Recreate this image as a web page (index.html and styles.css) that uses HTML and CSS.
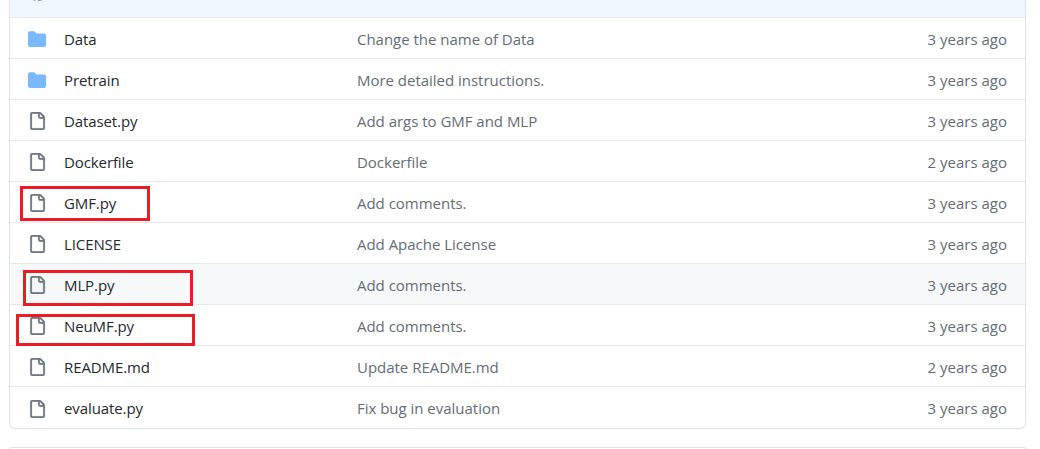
FILE: index.html
```html
<!DOCTYPE html>
<html lang="en">
<head>
  <meta charset="UTF-8">
  <title>Files</title>
  <link rel="stylesheet" href="styles.css">
</head>
<body>

<svg width="0" height="0" class="defs">
  <symbol id="folder" viewBox="0 0 16 16">
    <path d="M1.75 1A1.75 1.75 0 0 0 0 2.75v10.5C0 14.216.784 15 1.75 15h12.5A1.75 1.75 0 0 0 16 13.25v-8.5A1.75 1.75 0 0 0 14.25 3H7.5a.25.25 0 0 1-.2-.1l-.9-1.2C6.07 1.26 5.55 1 5 1H1.75Z"/>
  </symbol>
  <symbol id="file" viewBox="0 0 16 16">
    <path d="M2 1.75C2 .784 2.784 0 3.75 0h6.586c.464 0 .909.184 1.237.513l2.914 2.914c.329.328.513.773.513 1.237v9.586A1.75 1.75 0 0 1 13.25 16h-9.5A1.75 1.75 0 0 1 2 14.25Zm1.75-.25a.25.25 0 0 0-.25.25v12.5c0 .138.112.25.25.25h9.5a.25.25 0 0 0 .25-.25V6h-2.75A1.75 1.75 0 0 1 9 4.25V1.5Zm6.75.062V4.25c0 .138.112.25.25.25h2.688a.252.252 0 0 0-.011-.013l-2.914-2.914a.272.272 0 0 0-.013-.011Z"/>
  </symbol>
</svg>

<div class="box">
  <div class="head"><i class="speck"></i></div>

  <div class="row">
    <svg class="icon folder"><use href="#folder"></use></svg>
    <span class="name">Data</span>
    <span class="msg">Change the name of Data</span>
    <span class="age">3 years ago</span>
  </div>
  <div class="row">
    <svg class="icon folder"><use href="#folder"></use></svg>
    <span class="name">Pretrain</span>
    <span class="msg">More detailed instructions.</span>
    <span class="age">3 years ago</span>
  </div>
  <div class="row">
    <svg class="icon"><use href="#file"></use></svg>
    <span class="name">Dataset.py</span>
    <span class="msg">Add args to GMF and MLP</span>
    <span class="age">3 years ago</span>
  </div>
  <div class="row">
    <svg class="icon"><use href="#file"></use></svg>
    <span class="name">Dockerfile</span>
    <span class="msg">Dockerfile</span>
    <span class="age">2 years ago</span>
  </div>
  <div class="row">
    <svg class="icon"><use href="#file"></use></svg>
    <span class="name">GMF.py</span>
    <span class="msg">Add comments.</span>
    <span class="age">3 years ago</span>
  </div>
  <div class="row">
    <svg class="icon"><use href="#file"></use></svg>
    <span class="name">LICENSE</span>
    <span class="msg">Add Apache License</span>
    <span class="age">3 years ago</span>
  </div>
  <div class="row hover">
    <svg class="icon"><use href="#file"></use></svg>
    <span class="name">MLP.py</span>
    <span class="msg">Add comments.</span>
    <span class="age">3 years ago</span>
  </div>
  <div class="row">
    <svg class="icon"><use href="#file"></use></svg>
    <span class="name">NeuMF.py</span>
    <span class="msg">Add comments.</span>
    <span class="age">3 years ago</span>
  </div>
  <div class="row">
    <svg class="icon"><use href="#file"></use></svg>
    <span class="name">README.md</span>
    <span class="msg">Update README.md</span>
    <span class="age">2 years ago</span>
  </div>
  <div class="row">
    <svg class="icon"><use href="#file"></use></svg>
    <span class="name">evaluate.py</span>
    <span class="msg">Fix bug in evaluation</span>
    <span class="age">3 years ago</span>
  </div>
</div>

<div class="box next"></div>

<!-- red marks drawn over the screenshot -->
<div class="mark mark1"></div>
<div class="mark mark2"></div>
<div class="mark mark3"></div>

</body>
</html>
```

FILE: styles.css
```css
* {
  margin: 0;
  padding: 0;
  box-sizing: border-box;
}

html,
body {
  height: 100%;
  overflow: hidden;
}

body {
  position: relative;
  background-color: #fff;
  font: 400 15px/21px "Open Sans", "Noto Sans", "Liberation Sans", sans-serif;
  color: #24292f;
}

.defs {
  position: absolute;
}

.box {
  width: 1017px;
  margin-left: 9px;
  border: 1px solid #e1e4e8;
  border-top: 0;
  border-radius: 0 0 6px 6px;
}

.head {
  height: 17px;
  background-color: #f0f7ff;
  position: relative;
}

.speck {
  position: absolute;
  top: 0;
  left: 23px;
  width: 9px;
  height: 1px;
  background: linear-gradient(90deg, #b9c9f5 0 3px, #fff 3px 5px, #a98cf0 5px 7px, #9cc2f5 7px);
}

.row {
  display: flex;
  align-items: center;
  height: 41px;
  padding: 2px 18px 0 18px;
  border-top: 1px solid #e6e8eb;
}

.row:last-child {
  height: 42px;
}

.hover {
  background-color: #f6f8fa;
}

.icon {
  width: 18px;
  height: 18px;
  fill: #6e7681;
  stroke: #6e7681;
  stroke-width: .2;
  flex: none;
}

.folder {
  fill: #7ab8ff;
  stroke: none;
}

.name {
  width: 293px;
  margin-left: 18px;
  flex: none;
  letter-spacing: -.1px;
}

.msg {
  flex: 1;
  color: #656d76;
  letter-spacing: -.02px;
}

.age {
  color: #656d76;
}

.next {
  height: 2px;
  margin-top: 18px;
  border-top: 1px solid #e1e4e8;
  border-bottom: 0;
  border-radius: 6px 6px 0 0;
}

.mark {
  position: absolute;
  border: 3px solid #ed1c24;
}

.mark1 {
  left: 20px;
  top: 186px;
  width: 130px;
  height: 35px;
}

.mark2 {
  left: 23px;
  top: 270px;
  width: 170px;
  height: 36px;
}

.mark3 {
  left: 16px;
  top: 314px;
  width: 179px;
  height: 32px;
}
```
